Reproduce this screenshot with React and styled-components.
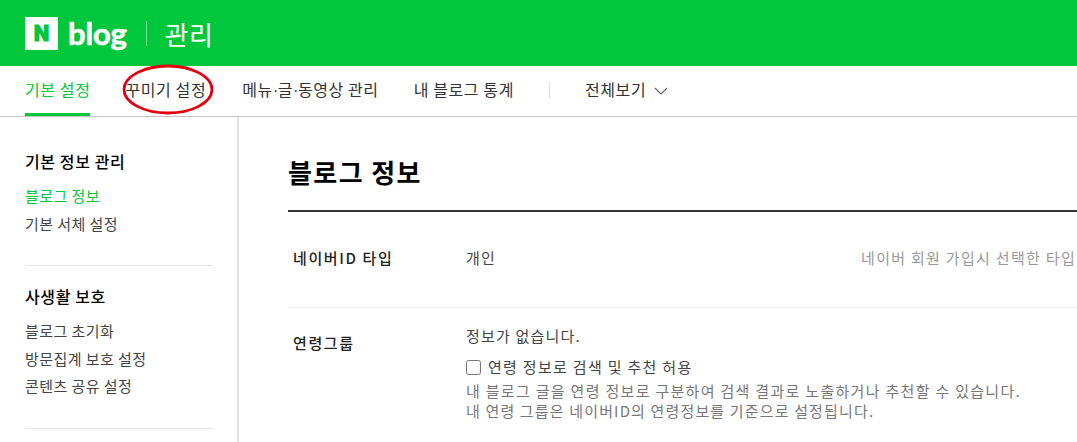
import styled, { createGlobalStyle } from "styled-components";

const GlobalStyle = createGlobalStyle`
  html, body {
    margin: 0;
    padding: 0;
    background: #fff;
    overflow: hidden;
  }
  body {
    font-family: "Noto Sans CJK KR", "Liberation Sans", sans-serif;
    color: #333;
  }
  ul {
    list-style: none;
    margin: 0;
    padding: 0;
  }
`;

const Page = styled.div`
  position: relative;
  width: 1077px;
  height: 442px;
  overflow: hidden;
`;

const Header = styled.header`
  height: 66px;
  background: #00c73c;
  padding-left: 25px;
  box-sizing: border-box;
  display: flex;
  align-items: center;
`;

const LogoMark = styled.span`
  width: 33px;
  height: 33px;
  background: #fff;
  color: #00c73c;
  font: 900 22px/33px "Roboto", sans-serif;
  text-align: center;
  -webkit-text-stroke: 1px #00c73c;
`;

const LogoWord = styled.span`
  margin-left: 10px;
  color: #fff;
  font: 700 31px/33px "Lato", sans-serif;
  letter-spacing: -0.2px;
  -webkit-text-stroke: 0.6px #fff;
`;

const LogoBar = styled.span`
  width: 1px;
  height: 25px;
  margin: 0 18px 0 19px;
  background: rgba(255, 255, 255, 0.45);
`;

const LogoTitle = styled.span`
  color: #fff;
  font-size: 26px;
  line-height: 33px;
  letter-spacing: 0.4px;
`;

const Nav = styled.nav`
  height: 51px;
  box-sizing: border-box;
  border-bottom: 1px solid #c4c4c4;
  padding-left: 25px;
  display: flex;
  align-items: stretch;
`;

const Tab = styled.a`
  height: 50px;
  box-sizing: border-box;
  margin-right: ${(p) => p.$gap}px;
  font-size: 16px;
  line-height: 47px;
  letter-spacing: 0.6px;
  white-space: nowrap;
  color: ${(p) => (p.$active ? "#00c73c" : "#333")};
  border-bottom: 3px solid ${(p) => (p.$active ? "#00c73c" : "transparent")};
`;

const TabDot = styled.span`
  font-family: "Liberation Sans", sans-serif;
  letter-spacing: -0.5px;
`;

const NavDivider = styled.span`
  width: 1px;
  height: 16px;
  margin: 16px 35px 0 0;
  background: #ddd;
`;

const Chevron = styled.svg`
  width: 14px;
  height: 8px;
  margin: 21px 0 0 8px;
`;

const Body = styled.div`
  display: flex;
  height: 325px;
`;

const Sidebar = styled.aside`
  width: 239px;
  flex: none;
  box-sizing: border-box;
  border-right: 2px solid #e2e2e2;
  padding: 31px 24px 0 25px;
`;

const SideGroup = styled.section`
  padding-bottom: 28px;
  margin-bottom: 17px;
  border-bottom: 1px solid #e6e6e6;
`;

const SideTitle = styled.h3`
  margin: 0 0 8px;
  font-size: 16px;
  font-weight: 500;
  line-height: 26px;
  letter-spacing: 0.6px;
  color: #000;
`;

const SideItem = styled.li`
  font-size: 15px;
  line-height: 27.5px;
  letter-spacing: 0.45px;
  color: ${(p) => (p.$active ? "#00c73c" : "#444")};
`;

const Main = styled.main`
  flex: 1;
  padding: 0 0 0 49px;
`;

const Title = styled.h2`
  margin: 0;
  height: 95px;
  box-sizing: border-box;
  padding-top: 36px;
  border-bottom: 2px solid #333;
  font-size: 26px;
  font-weight: 700;
  line-height: 38px;
  letter-spacing: 1.4px;
  color: #000;
`;

const Row = styled.div`
  display: flex;
  padding-left: 5px;
  box-sizing: border-box;
  height: ${(p) => p.$height}px;
  border-bottom: ${(p) => (p.$line ? "1px solid #eee" : "none")};
`;

const RowLabel = styled.div`
  width: 173px;
  flex: none;
  font-size: 15px;
  font-weight: 500;
  line-height: 22px;
  letter-spacing: 1.6px;
  color: #222;
  padding-top: ${(p) => p.$top}px;
`;

const RowValue = styled.div`
  flex: 1;
  font-size: 15px;
  line-height: 20px;
  letter-spacing: 1.2px;
  color: #444;
  padding-top: ${(p) => p.$top}px;
`;

const SplitValue = styled(RowValue)`
  display: flex;
  justify-content: space-between;
  padding-right: 1px;
`;

const HintText = styled.span`
  color: #999;
  letter-spacing: 1.3px;
  white-space: nowrap;
`;

const CheckRow = styled.label`
  display: flex;
  align-items: center;
  margin: 11px 0 4px;
  letter-spacing: 1.3px;
  white-space: nowrap;
`;

const CheckBox = styled.span`
  width: 13px;
  height: 13px;
  margin-right: 7px;
  border: 1px solid #767676;
  border-radius: 2.5px;
  background: #fff;
`;

const Description = styled.p`
  margin: 0;
  color: #777;
  line-height: 20px;
  letter-spacing: ${(p) => p.$spacing}px;
  white-space: nowrap;
`;

const Annotation = styled.svg`
  position: absolute;
  left: 121px;
  top: 63px;
  width: 95px;
  height: 54px;
`;

const App = () => {
  return (
    <Page>
      <GlobalStyle />
      <Header>
        <LogoMark>N</LogoMark>
        <LogoWord>blog</LogoWord>
        <LogoBar />
        <LogoTitle>관리</LogoTitle>
      </Header>
      <Nav>
        <Tab $active $gap={35}>기본 설정</Tab>
        <Tab $gap={36}>꾸미기 설정</Tab>
        <Tab $gap={35}>메뉴<TabDot>·</TabDot>글<TabDot>·</TabDot>동영상 관리</Tab>
        <Tab $gap={35}>내 블로그 통계</Tab>
        <NavDivider />
        <Tab $gap={0}>전체보기</Tab>
        <Chevron viewBox="0 0 14 8">
          <path d="M1 1l6 6 6-6" fill="none" stroke="#666" strokeWidth="1.2" />
        </Chevron>
      </Nav>
      <Body>
        <Sidebar>
          <SideGroup>
            <SideTitle>기본 정보 관리</SideTitle>
            <ul>
              <SideItem $active>블로그 정보</SideItem>
              <SideItem>기본 서체 설정</SideItem>
            </ul>
          </SideGroup>
          <SideGroup>
            <SideTitle>사생활 보호</SideTitle>
            <ul>
              <SideItem>블로그 초기화</SideItem>
              <SideItem>방문집계 보호 설정</SideItem>
              <SideItem>콘텐츠 공유 설정</SideItem>
            </ul>
          </SideGroup>
        </Sidebar>
        <Main>
          <Title>블로그 정보</Title>
          <Row $line $height={96}>
            <RowLabel $top={35}>네이버ID 타입</RowLabel>
            <SplitValue $top={36}>
              <span>개인</span>
              <HintText>네이버 회원 가입시 선택한 타입</HintText>
            </SplitValue>
          </Row>
          <Row $height={130}>
            <RowLabel $top={24}>연령그룹</RowLabel>
            <RowValue $top={18}>
              <div>정보가 없습니다.</div>
              <CheckRow>
                <CheckBox />
                연령 정보로 검색 및 추천 허용
              </CheckRow>
              <Description $spacing={1.3}>내 블로그 글을 연령 정보로 구분하여 검색 결과로 노출하거나 추천할 수 있습니다.</Description>
              <Description $spacing={1.15}>내 연령 그룹은 네이버ID의 연령정보를 기준으로 설정됩니다.</Description>
            </RowValue>
          </Row>
        </Main>
      </Body>
      <Annotation viewBox="0 0 95 54">
        <ellipse cx="47" cy="26.5" rx="44" ry="23.5" fill="none" stroke="#e0000f" strokeWidth="2.8" />
      </Annotation>
    </Page>
  );
};

export default App;
